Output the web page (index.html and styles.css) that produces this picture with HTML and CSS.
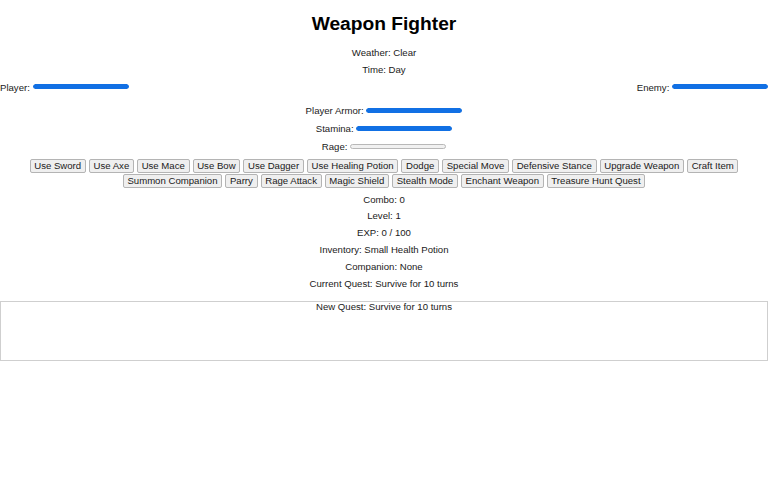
FILE: index.html
```html
<!DOCTYPE html>
<html>
<head>
<meta charset="utf-8">
<title>Weapon Fighter</title>
<link rel="stylesheet" href="styles.css">
</head>
<body>
<h1 class="title">Weapon Fighter</h1>
<div class="info">Weather: Clear</div>
<div class="info">Time: Day</div>
<div class="health-row">
  <div class="meter">Player: <span class="bar"><span class="fill" style="width:100%"></span></span></div>
  <div class="meter">Enemy: <span class="bar"><span class="fill" style="width:100%"></span></span></div>
</div>
<div class="stats">
  <div class="stat">Player Armor: <span class="bar"><span class="fill" style="width:100%"></span></span></div>
  <div class="stat">Stamina: <span class="bar"><span class="fill" style="width:100%"></span></span></div>
  <div class="stat">Rage: <span class="bar empty"><span class="fill" style="width:0%"></span></span></div>
</div>
<div class="actions">
  <div class="action-row">
    <button class="btn">Use Sword</button>
    <button class="btn">Use Axe</button>
    <button class="btn">Use Mace</button>
    <button class="btn">Use Bow</button>
    <button class="btn">Use Dagger</button>
    <button class="btn">Use Healing Potion</button>
    <button class="btn">Dodge</button>
    <button class="btn">Special Move</button>
    <button class="btn">Defensive Stance</button>
    <button class="btn">Upgrade Weapon</button>
    <button class="btn">Craft Item</button>
  </div>
  <div class="action-row">
    <button class="btn">Summon Companion</button>
    <button class="btn">Parry</button>
    <button class="btn">Rage Attack</button>
    <button class="btn">Magic Shield</button>
    <button class="btn">Stealth Mode</button>
    <button class="btn">Enchant Weapon</button>
    <button class="btn">Treasure Hunt Quest</button>
  </div>
</div>
<div class="details">
  <div class="line">Combo: 0</div>
  <div class="line">Level: 1</div>
  <div class="line">EXP: 0 / 100</div>
  <div class="line">Inventory: Small Health Potion</div>
  <div class="line">Companion: None</div>
  <div class="line">Current Quest: Survive for 10 turns</div>
</div>
<div class="log">
  <div class="log-entry">New Quest: Survive for 10 turns</div>
</div>
</body>
</html>
```
FILE: styles.css
```css
html, body {
  margin: 0;
  padding: 0;
  background: #fff;
}
body {
  font-family: "Liberation Sans", Arial, sans-serif;
  font-size: 9.6px;
  color: #1a1a1a;
  text-align: center;
}
.title {
  font-size: 19.2px;
  font-weight: bold;
  line-height: 22px;
  margin: 13px 0 0;
  color: #000;
}
.info {
  line-height: 17px;
}
.title + .info {
  margin-top: 8.5px;
}
.health-row {
  display: flex;
  justify-content: space-between;
  align-items: center;
  line-height: 17px;
  margin-top: 1px;
}
.bar {
  display: inline-block;
  width: 96px;
  height: 5px;
  border-radius: 3px;
  background: #ececec;
  vertical-align: middle;
  overflow: hidden;
  position: relative;
  top: -1px;
}
.bar .fill {
  display: block;
  height: 100%;
  background: #1170e4;
  border-radius: 3px;
}
.bar.empty {
  box-sizing: border-box;
  border: 1px solid #b8b8b8;
  background: #f1f1f1;
}
.stats {
  margin-top: 6.5px;
}
.stat {
  line-height: 18px;
}
.actions {
  margin-top: 3px;
  display: flex;
  flex-direction: column;
  gap: 1px;
}
.action-row {
  display: flex;
  justify-content: center;
  gap: 3px;
}
.btn {
  font-family: "Liberation Sans", Arial, sans-serif;
  font-size: 9.6px;
  color: #1a1a1a;
  height: 14px;
  line-height: 12px;
  padding: 0 3.7px;
  margin: 0;
  border: 1px solid #b4b4b4;
  border-radius: 2px;
  background: #efefef;
}
.details {
  margin-top: 3.6px;
}
.line {
  line-height: 16.8px;
}
.log {
  margin-top: 8.6px;
  height: 60px;
  box-sizing: border-box;
  border: 1px solid #cfcfcf;
}
.log-entry {
  line-height: 9px;
}
```
